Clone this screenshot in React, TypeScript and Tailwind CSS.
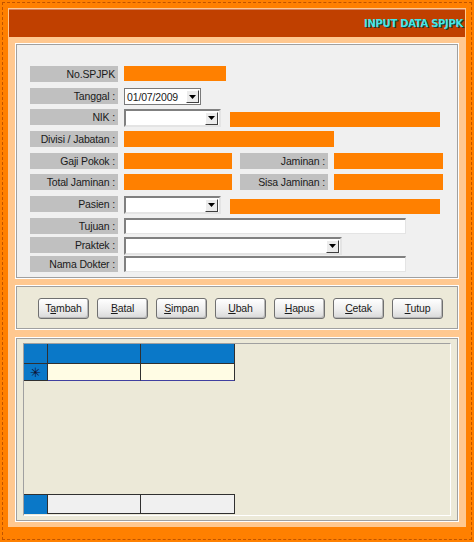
import React from "react";

const txt = "font-['Liberation_Sans',Arial,sans-serif] text-[10.5px] tracking-[-0.15px] text-[#1a1a1a]";

function Lbl({ text, className = "" }: { text: string; className?: string }) {
  return (
    <div
      className={`w-[88px] h-[16px] shrink-0 bg-[#c0c0c0] text-right pr-[3px] leading-[16px] ${txt} ${className}`}
    >
      {text}
    </div>
  );
}

function DropBtn() {
  return (
    <div className="w-[13px] h-[13px] shrink-0 bg-[#ececec] border border-t-[#fff] border-l-[#fff] border-b-[#404040] border-r-[#404040] flex items-center justify-center">
      <svg width="7" height="4" viewBox="0 0 7 4">
        <path d="M0 0h7L3.5 4z" fill="#000" />
      </svg>
    </div>
  );
}

function Combo({ className }: { className: string }) {
  return (
    <div
      className={`h-[18px] bg-white border-2 border-t-[#808080] border-l-[#808080] border-b-[#e4e4e4] border-r-[#e4e4e4] flex items-center justify-end pr-[1px] ${className}`}
    >
      <DropBtn />
    </div>
  );
}

function TextBox({ className }: { className: string }) {
  return (
    <div
      className={`h-[16px] bg-white border-t-2 border-l-2 border-b border-r border-t-[#808080] border-l-[#808080] border-b-[#e4e4e4] border-r-[#e4e4e4] ${className}`}
    />
  );
}

function Btn({ pre, u, post }: { pre: string; u: string; post: string }) {
  return (
    <button className="w-[51px] h-[21px] rounded-[3px] border border-[#707070] bg-[linear-gradient(#ffffff,#ececec_60%,#d8d8d8)] shadow-[inset_-1px_-1px_0_#b8b8b8] flex items-center justify-center p-0">
      <span className={txt}>
        {pre}
        <span className="underline">{u}</span>
        {post}
      </span>
    </button>
  );
}

export default function App() {
  return (
    <div className="w-[474px] h-[542px] bg-[#ff8000] p-[2px]">
      <div className="w-full h-full border border-dashed border-[#c05400] px-[5px] pt-[5px] pb-[12px]">
        <div className="w-full h-full bg-[#ffc890] p-[1px] flex flex-col">
          {/* title bar */}
          <div className="h-[28px] shrink-0 bg-[#c04000] border-t border-[#d08060] flex items-center justify-end pr-[2px]">
            <span className="font-['DejaVu_Sans',sans-serif] font-bold text-[10px] text-[#40e8e8] tracking-[-0.3px] [text-shadow:1px_1px_0_#1a3a3a]">
              INPUT DATA SPJPK
            </span>
          </div>

          {/* form panel */}
          <div className="mx-[6px] mt-[6px] h-[236px] shrink-0 bg-[#f0f0f0] border border-white shadow-[inset_1px_1px_0_#a0a0a0,inset_-1px_-1px_0_#a0a0a0] pl-[14px] pt-[22px]">
            <div className="flex items-start h-[16px]">
              <Lbl text="No.SPJPK" />
              <div className="ml-[6px] w-[102px] h-[15px] bg-[#ff8000]" />
            </div>
            <div className="flex items-start h-[17px] mt-[6px]">
              <Lbl text="Tanggal :" />
              <div className="ml-[6px] w-[77px] h-[17px] bg-white border border-[#7a7a7a] flex items-center justify-between pl-[2px] pr-[1px]">
                <span className={`${txt} leading-[14px]`}>01/07/2009</span>
                <DropBtn />
              </div>
            </div>
            <div className="flex items-start h-[18px] mt-[4px]">
              <Lbl text="NIK :" />
              <Combo className="ml-[6px] w-[97px]" />
              <div className="ml-[9px] mt-[3px] w-[210px] h-[15px] bg-[#ff8000]" />
            </div>
            <div className="flex items-start h-[16px] mt-[4px]">
              <Lbl text="Divisi / Jabatan :" />
              <div className="ml-[6px] w-[210px] h-[16px] bg-[#ff8000]" />
            </div>
            <div className="flex items-start h-[16px] mt-[6px]">
              <Lbl text="Gaji Pokok :" />
              <div className="ml-[6px] w-[108px] h-[16px] bg-[#ff8000]" />
              <Lbl text="Jaminan :" className="ml-[8px]" />
              <div className="ml-[6px] w-[109px] h-[16px] bg-[#ff8000]" />
            </div>
            <div className="flex items-start h-[16px] mt-[5px]">
              <Lbl text="Total Jaminan :" />
              <div className="ml-[6px] w-[108px] h-[16px] bg-[#ff8000]" />
              <Lbl text="Sisa Jaminan :" className="ml-[8px]" />
              <div className="ml-[6px] w-[109px] h-[16px] bg-[#ff8000]" />
            </div>
            <div className="flex items-start h-[18px] mt-[6px]">
              <Lbl text="Pasien :" />
              <Combo className="ml-[6px] w-[97px]" />
              <div className="ml-[9px] mt-[3px] w-[210px] h-[15px] bg-[#ff8000]" />
            </div>
            <div className="flex items-start h-[16px] mt-[4px]">
              <Lbl text="Tujuan :" />
              <TextBox className="ml-[6px] w-[282px]" />
            </div>
            <div className="flex items-start h-[17px] mt-[3px]">
              <Lbl text="Praktek :" />
              <Combo className="ml-[6px] w-[218px] h-[17px]" />
            </div>
            <div className="flex items-start h-[16px] mt-[2px]">
              <Lbl text="Nama Dokter :" />
              <TextBox className="ml-[6px] w-[282px]" />
            </div>
          </div>

          {/* buttons panel */}
          <div className="mx-[6px] mt-[6px] h-[45px] shrink-0 bg-[#ece9d8] border border-white shadow-[inset_1px_1px_0_#a0a0a0,inset_-1px_-1px_0_#a0a0a0] flex items-start gap-[8px] pl-[22px] pt-[12px]">
            <Btn pre="T" u="a" post="mbah" />
            <Btn pre="" u="B" post="atal" />
            <Btn pre="" u="S" post="impan" />
            <Btn pre="" u="U" post="bah" />
            <Btn pre="" u="H" post="apus" />
            <Btn pre="" u="C" post="etak" />
            <Btn pre="" u="T" post="utup" />
          </div>

          {/* grid panel */}
          <div className="mx-[6px] mt-[7px] h-[185px] shrink-0 bg-[#ece9d8] border border-white shadow-[inset_1px_1px_0_#a0a0a0,inset_-1px_-1px_0_#a0a0a0] pl-[7px] pt-[5px] pr-[7px] pb-[5px]">
            <div className="h-full border-t border-l border-[#a0a0a0] border-b border-r border-b-white border-r-white flex flex-col">
              <div className="flex h-[20px] shrink-0">
                <div className="w-[24px] h-full bg-[#0a78c8] border-r border-b border-[#303030]" />
                <div className="w-[93px] h-full bg-[#0a78c8] border-r border-b border-[#303030]" />
                <div className="w-[94px] h-full bg-[#0a78c8] border-r border-b border-[#303030]" />
              </div>
              <div className="flex h-[17px] shrink-0">
                <div className="w-[24px] h-full bg-[#0a78c8] border-r border-b border-[#303030] flex items-center justify-center">
                  <span className="font-['DejaVu_Sans',sans-serif] text-[13px] leading-none text-[#101030]">✳</span>
                </div>
                <div className="w-[93px] h-full bg-[#fffce4] border-r border-b border-r-[#303030] border-b-[#4040a0]" />
                <div className="w-[94px] h-full bg-[#fffce4] border-r border-b border-r-[#303030] border-b-[#4040a0]" />
              </div>
              <div className="flex-1" />
              <div className="flex h-[20px] shrink-0 mb-[1px]">
                <div className="w-[24px] h-full bg-[#0a78c8] border-t border-r border-[#303030]" />
                <div className="w-[93px] h-full bg-[#f0f0f0] border-t border-r border-b border-[#303030]" />
                <div className="w-[94px] h-full bg-[#f0f0f0] border-t border-r border-b border-[#303030]" />
              </div>
            </div>
          </div>
        </div>
      </div>
    </div>
  );
}
